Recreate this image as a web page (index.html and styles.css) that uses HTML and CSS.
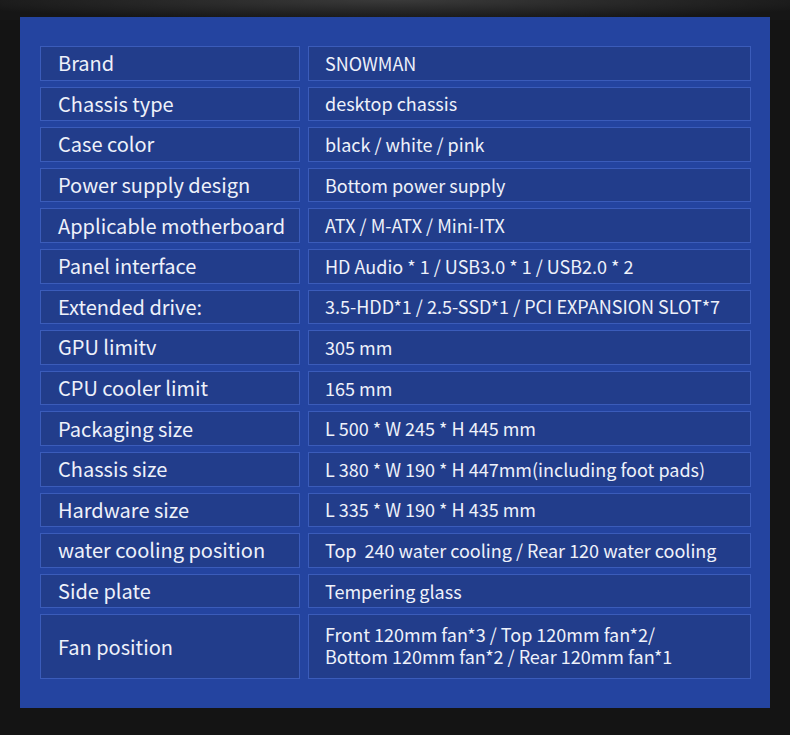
FILE: index.html
```html
<!DOCTYPE html>
<html>
<head>
<meta charset="utf-8">
<link rel="stylesheet" href="styles.css">
</head>
<body>
<div class="page">
  <div class="topband"></div>
  <div class="panel">
    <div class="table">
      <div class="row"><div class="cell label">Brand</div><div class="cell value">SNOWMAN</div></div>
      <div class="row"><div class="cell label">Chassis type</div><div class="cell value">desktop chassis</div></div>
      <div class="row"><div class="cell label">Case color</div><div class="cell value">black / white / pink</div></div>
      <div class="row"><div class="cell label">Power supply design</div><div class="cell value">Bottom power supply</div></div>
      <div class="row"><div class="cell label">Applicable motherboard</div><div class="cell value">ATX / M-ATX / Mini-ITX</div></div>
      <div class="row"><div class="cell label">Panel interface</div><div class="cell value">HD Audio * 1 / USB3.0 * 1 / USB2.0 * 2</div></div>
      <div class="row"><div class="cell label">Extended drive:</div><div class="cell value">3.5-HDD*1 / 2.5-SSD*1 / PCI EXPANSION SLOT*7</div></div>
      <div class="row"><div class="cell label">GPU limitv</div><div class="cell value">305 mm</div></div>
      <div class="row"><div class="cell label">CPU cooler limit</div><div class="cell value">165 mm</div></div>
      <div class="row"><div class="cell label">Packaging size</div><div class="cell value">L 500 * W 245 * H 445 mm</div></div>
      <div class="row"><div class="cell label">Chassis size</div><div class="cell value">L 380 * W 190 * H 447mm(including foot pads)</div></div>
      <div class="row"><div class="cell label">Hardware size</div><div class="cell value">L 335 * W 190 * H 435 mm</div></div>
      <div class="row"><div class="cell label">water cooling position</div><div class="cell value">Top&nbsp; 240 water cooling / Rear 120 water cooling</div></div>
      <div class="row"><div class="cell label">Side plate</div><div class="cell value">Tempering glass</div></div>
      <div class="row tall"><div class="cell label">Fan position</div><div class="cell value multi">Front 120mm fan*3 / Top 120mm fan*2/<br>Bottom 120mm fan*2 / Rear 120mm fan*1</div></div>
    </div>
  </div>
</div>
</body>
</html>
```

FILE: styles.css
```css
html, body {
  margin: 0;
  padding: 0;
  background: #141414;
}
body {
  width: 790px;
  height: 735px;
  overflow: hidden;
  font-family: "Noto Sans CJK SC", "Source Sans Pro", "Noto Sans", sans-serif;
  color: #eef1fa;
}
.page {
  position: relative;
  width: 790px;
  height: 735px;
  padding-top: 17px;
  box-sizing: border-box;
}
.topband {
  position: absolute;
  left: 0;
  top: 0;
  width: 790px;
  height: 20px;
  background: radial-gradient(ellipse 60% 100% at 50% 0%, #3a3a3a 0%, #262626 55%, #161616 100%);
}
.panel {
  position: relative;
  margin-left: 20px;
  width: 750px;
  height: 691px;
  background: #2444a0;
  padding: 29px 20px 0 20px;
  box-sizing: border-box;
}
.table {
  display: flex;
  flex-direction: column;
  gap: 6px;
}
.row {
  display: grid;
  grid-template-columns: 260px 443px;
  column-gap: 8px;
  height: 34.6px;
}
.row.tall {
  height: 65px;
}
.cell {
  background: #223d8b;
  border: 1px solid #3b5cba;
  box-sizing: border-box;
  display: flex;
  align-items: center;
  white-space: nowrap;
}
.label {
  font-size: 20px;
  padding-left: 17px;
  padding-bottom: 1px;
}
.value {
  font-size: 18px;
  padding-left: 16px;
  padding-bottom: 1px;
}
.value.multi {
  line-height: 22px;
  padding-bottom: 3px;
}
```
